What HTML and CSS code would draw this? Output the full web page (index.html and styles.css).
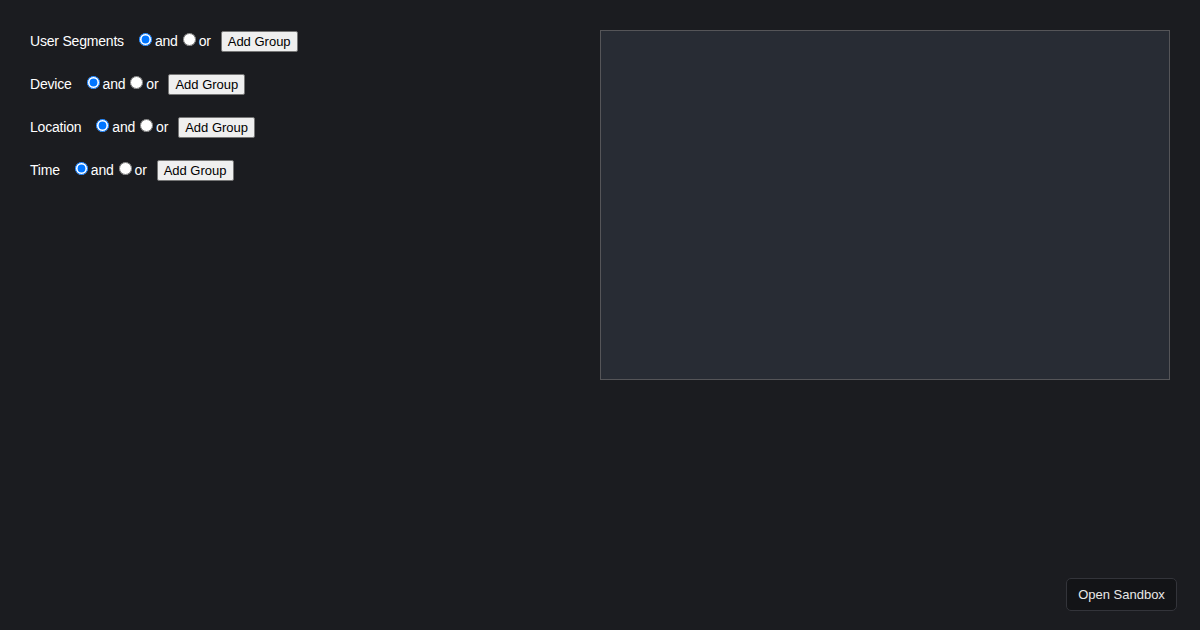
FILE: index.html
```html
<!DOCTYPE html>
<html>
<head>
<meta charset="utf-8">
<link rel="stylesheet" href="styles.css">
</head>
<body>
<div class="page">
  <div class="controls">
    <div class="row">
      <span class="label">User Segments</span>
      <label class="opt"><input type="radio" name="g1" checked>and</label>
      <label class="opt"><input type="radio" name="g1">or</label>
      <button class="add">Add Group</button>
    </div>
    <div class="row">
      <span class="label">Device</span>
      <label class="opt"><input type="radio" name="g2" checked>and</label>
      <label class="opt"><input type="radio" name="g2">or</label>
      <button class="add">Add Group</button>
    </div>
    <div class="row">
      <span class="label">Location</span>
      <label class="opt"><input type="radio" name="g3" checked>and</label>
      <label class="opt"><input type="radio" name="g3">or</label>
      <button class="add">Add Group</button>
    </div>
    <div class="row">
      <span class="label">Time</span>
      <label class="opt"><input type="radio" name="g4" checked>and</label>
      <label class="opt"><input type="radio" name="g4">or</label>
      <button class="add">Add Group</button>
    </div>
  </div>
  <div class="panel"></div>
</div>
<button class="sandbox">Open Sandbox</button>
</body>
</html>
```
FILE: styles.css
```css
html, body {
  margin: 0;
  padding: 0;
  background: #1b1c20;
  width: 1200px;
  height: 630px;
  overflow: hidden;
  font-family: "Liberation Sans", Arial, sans-serif;
  color: #ffffff;
}
.page {
  display: flex;
  justify-content: space-between;
  padding: 30px 30px 0 30px;
}
.controls {
  display: flex;
  flex-direction: column;
  gap: 22px;
}
.row {
  display: flex;
  align-items: center;
  height: 21px;
  font-size: 14px;
  letter-spacing: -0.2px;
}
.label {
  margin-right: 10px;
}
.opt {
  display: flex;
  align-items: center;
}
.opt input {
  margin: 0 3px 2px 5px;
  width: 13px;
  height: 13px;
}
.add {
  margin-left: 10px;
  margin-top: 1px;
  font-family: "Liberation Sans", Arial, sans-serif;
  font-size: 13px;
  letter-spacing: 0;
  height: 21px;
  padding: 1px 6px;
  background: #efefef;
  color: #000;
  border: 1px solid #767676;
  border-radius: 2px;
}
.panel {
  width: 568px;
  height: 348px;
  background: #282c34;
  border: 1px solid #555558;
}
.sandbox {
  position: absolute;
  right: 23px;
  bottom: 19px;
  width: 111px;
  height: 33px;
  background: #131417;
  color: #e8e8e8;
  border: 1px solid #33343a;
  border-radius: 5px;
  font-family: "Liberation Sans", Arial, sans-serif;
  font-size: 13px;
  padding: 0;
}
```
